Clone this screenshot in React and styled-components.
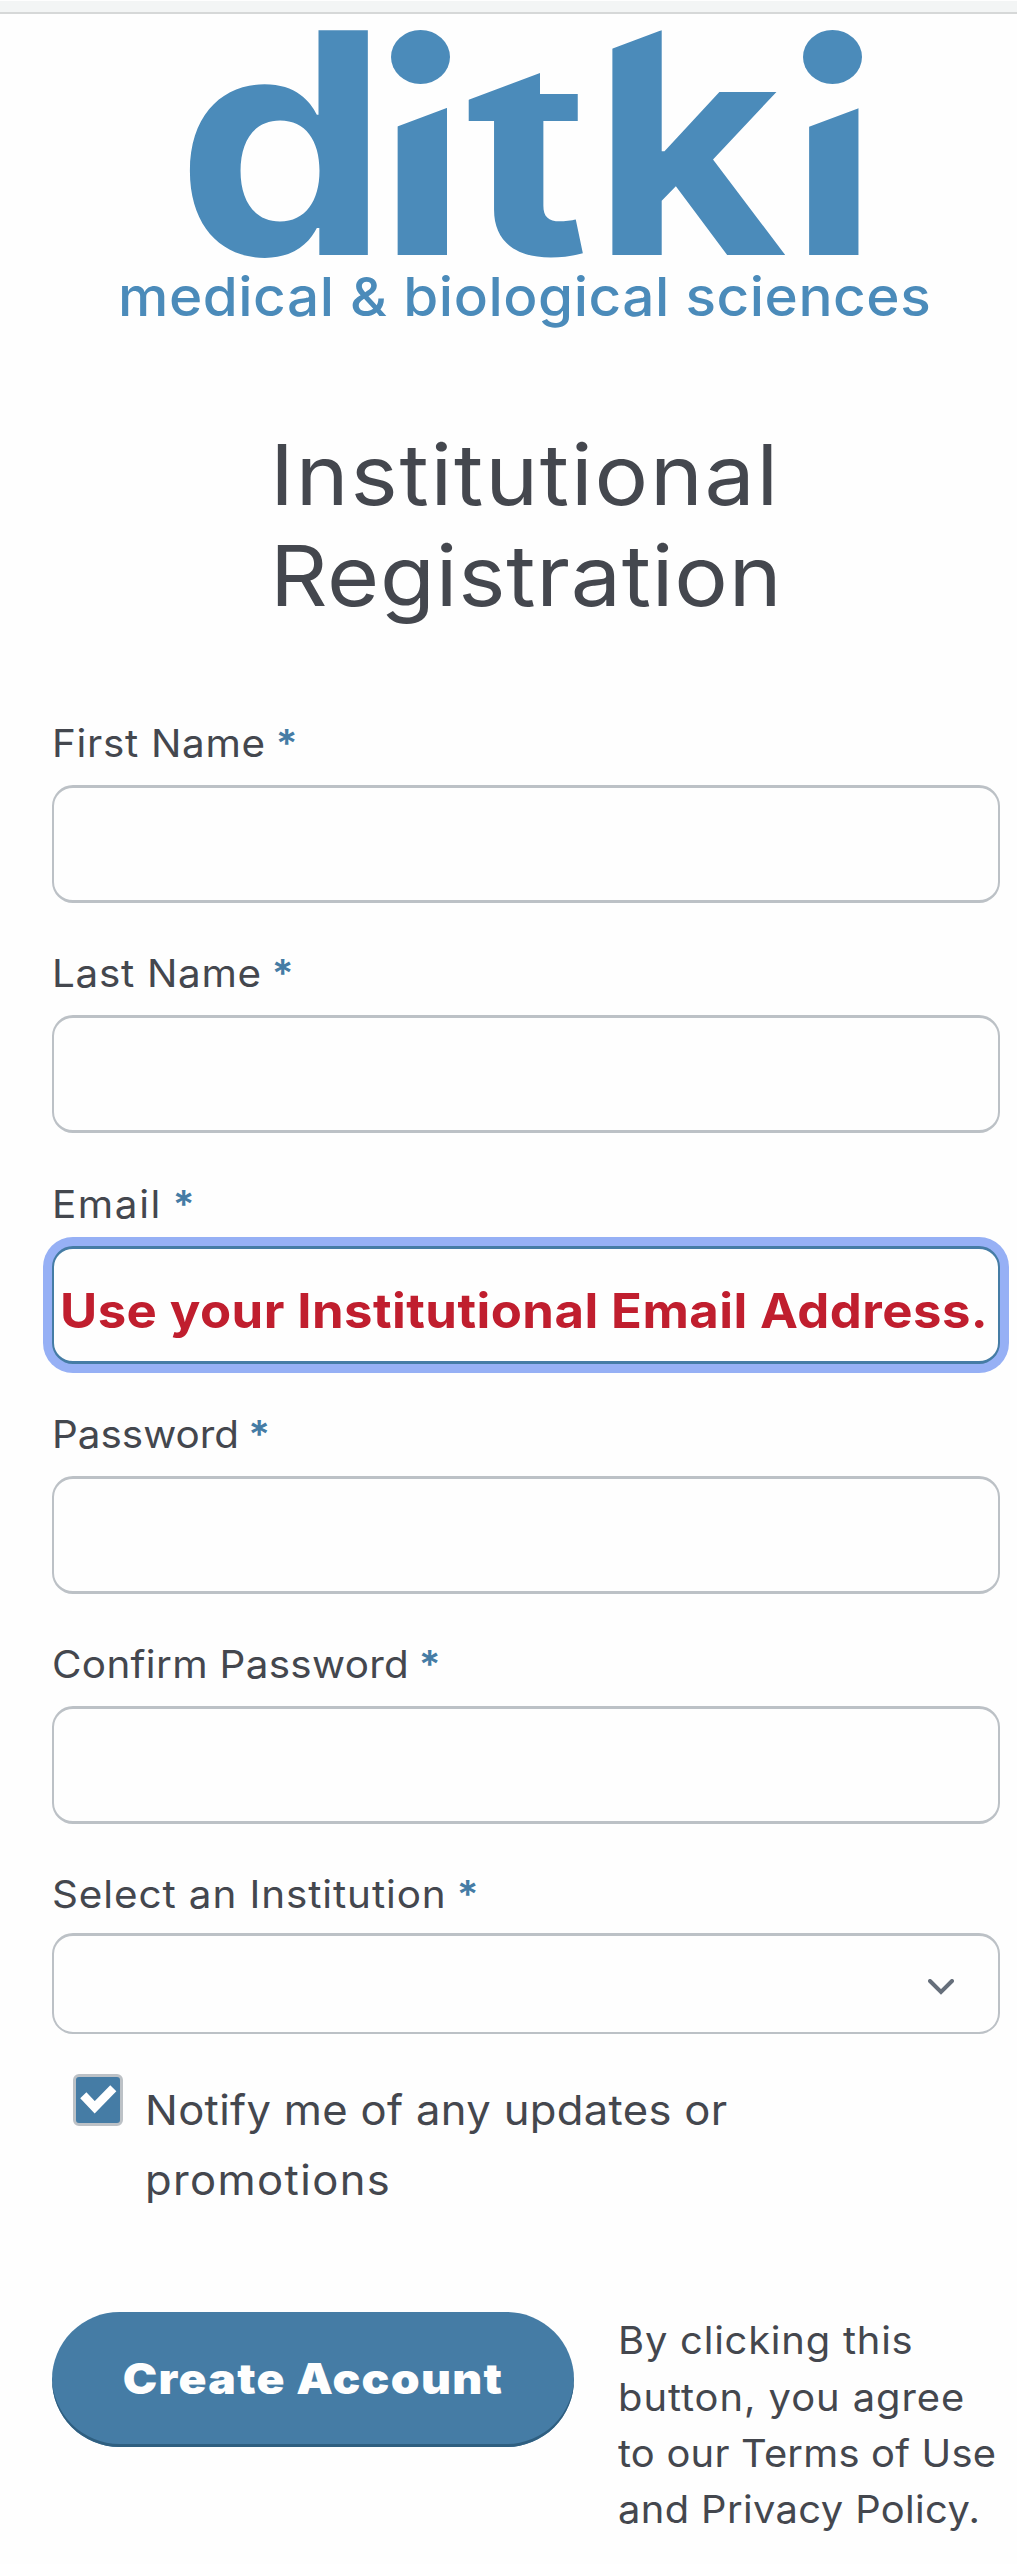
import React, { useState } from 'react'
import styled, { createGlobalStyle } from 'styled-components'

const fields=[
    {id:'firstName',label:'First Name',type:'text',spacing:0.65},
    {id:'lastName',label:'Last Name',type:'text',spacing:0.65},
    {id:'email',label:'Email',type:'email',spacing:1.5,hint:'Use your Institutional Email Address.'},
    {id:'password',label:'Password',type:'password',spacing:0},
    {id:'confirm',label:'Confirm Password',type:'password',spacing:0.3},
];

function Logo() {
    return (
    <Brand>
        <svg width="1017" height="246" viewBox="0 14 1017 246" role="img">
            <clipPath id="cuts">
                <path d="M180 14H380V260H180Z M380 133L460 103V260H380Z M464 101.5L540 73V94H600V260H464Z M602 52.4L662 30L680 23V92H795V260H602Z M795 132L870 104V260H795Z"/>
            </clipPath>
            <g fill="#4b8bba">
                <g clipPath="url(#cuts)">
                    <text
                        transform="scale(1.09 1)"
                        x="162 345.5 427 542.5 723"
                        y="255"
                        fontFamily="Inter, sans-serif"
                        fontSize="309"
                        fontWeight="700"
                    >ditki</text>
                </g>
                <ellipse cx="420.5" cy="57" rx="29.5" ry="27"/>
                <ellipse cx="832.5" cy="57" rx="29.5" ry="27"/>
            </g>
        </svg>
        <Tagline>medical &amp; biological sciences</Tagline>
    </Brand>
    )
}

function App() {
    const [notify,setNotify]=useState(true);

    return (
    <Page>
        <GlobalStyle/>
        <TopBar/>
        <Logo/>
        <Title>
            <Line $stretch={1.065} $spacing={1.7}>Institutional</Line>
            <Line $stretch={1.065} $spacing={0.75}>Registration</Line>
        </Title>
        <Form onSubmit={e=>e.preventDefault()}>
            {fields.map(f=>(
                <Field key={f.id}>
                    <Label htmlFor={f.id} $spacing={f.spacing}>{f.label} <span>*</span></Label>
                    {f.hint
                        ? <InputBox $active><Hint>{f.hint}</Hint></InputBox>
                        : <InputBox as="input" id={f.id} type={f.type}/>}
                </Field>
            ))}
            <SelectField>
                <Label $spacing={0.85}>Select an Institution <span>*</span></Label>
                <SelectBox type="button">
                    <svg width="26" height="16" viewBox="0 0 26 16" fill="none" stroke="#666f7b" strokeWidth="4">
                        <path d="M2 2L13 13L24 2" strokeLinecap="round"/>
                    </svg>
                </SelectBox>
            </SelectField>
            <Notify>
                <Checkbox type="button" onClick={()=>setNotify(!notify)}>
                    {notify && (
                        <svg width="44" height="46" viewBox="3 3 44 46" fill="none" stroke="#fff" strokeWidth="8.5">
                            <path d="M10.3 21.3L21.7 33.3L40.3 14.3"/>
                        </svg>
                    )}
                </Checkbox>
                <NotifyText>
                    <Line $spacing={0.3}>Notify me of any updates or</Line>
                    <Line $spacing={1.3}>promotions</Line>
                </NotifyText>
            </Notify>
            <Submit>
                <Button type="submit"><span>Create Account</span></Button>
                <Terms>
                    <Line $spacing={0.75}>By clicking this</Line>
                    <Line $spacing={0.9}>button, you agree</Line>
                    <Line $spacing={0.2}>to our Terms of Use</Line>
                    <Line $spacing={0.35}>and Privacy Policy.</Line>
                </Terms>
            </Submit>
        </Form>
    </Page>
    )
}

const GlobalStyle=createGlobalStyle`
*{
    box-sizing: border-box;
}

body{
    margin: 0;
    background: #fefefe;
    color: #44474e;
    font-family: Inter, "Open Sans", sans-serif;
}
`;

const Page=styled.div`
width: 1017px;
height: 2564px;
overflow: hidden;
`;

const TopBar=styled.div`
height: 14px;
background: #f3f5f5;
border-top: 1px solid #fefefe;
border-bottom: 2px solid #d6d8d8;
`;

// Letters are set slightly wide, so each line is stretched from its left edge
const Line=styled.span`
display: block;
width: max-content;
letter-spacing: ${props=>props.$spacing}px;
transform: scaleX(${props=>props.$stretch || 1.05});
transform-origin: left;
`;

const Brand=styled.div`
display: flex;
flex-direction: column;

svg{
    display: block;
}
`;

const Tagline=styled.div`
width: max-content;
height: 80px;
margin-left: 118px;
font-size: 54px;
font-weight: 450;
line-height: 74px;
letter-spacing: 0.5px;
white-space: nowrap;
color: #4b8bba;
transform: scaleX(1.05);
transform-origin: left;
`;

const Title=styled.h1`
margin: 84px 0 0;
padding-left: 270px;
font-size: 84px;
font-weight: 400;
line-height: 101px;
white-space: nowrap;
`;

const Form=styled.form`
padding: 86px 17px 0 52px;
`;

const Field=styled.div`
height: 230.25px;
`;

const Label=styled.label`
display: block;
width: max-content;
height: 73px;
font-size: 38.5px;
line-height: 62px;
letter-spacing: ${props=>props.$spacing}px;
white-space: nowrap;
transform: scaleX(1.05);
transform-origin: left;

span{
    margin-left: -2px;
    font-weight: 600;
    color: #457ca5;
}
`;

const InputBox=styled.div`
display: flex;
align-items: center;
width: 948px;
height: 118px;
padding: 12px 6px 0;
border: solid ${props=>props.$active ? '#457ca5' : '#bcc1c6'};
border-width: 3px 2px;
border-radius: 21px;
background: #fefefe;
box-shadow: ${props=>props.$active ? '0 0 0 9px #96b0f5' : 'none'};
outline: none;
`;

const Hint=styled.span`
font-size: 48px;
font-weight: 700;
letter-spacing: 0.4px;
white-space: nowrap;
color: #c01e2e;
transform: scaleX(1.06);
transform-origin: left;
`;

const SelectField=styled.div`
height: 212px;
`;

const SelectBox=styled.button`
display: flex;
align-items: center;
justify-content: flex-end;
width: 948px;
height: 101px;
margin-top: -3px;
padding: 6px 44px 0 0;
border: solid #bcc1c6;
border-width: 3px 2px 2px;
border-radius: 21px;
background: #fefefe;
`;

const Notify=styled.div`
display: flex;
gap: 22px;
height: 145px;
padding-left: 21px;
`;

const Checkbox=styled.button`
flex: none;
width: 50px;
height: 52px;
margin-top: -1px;
padding: 0;
border: 3px solid #bcc1c6;
border-radius: 6px;
background: #457ca5;

svg{
    display: block;
}
`;

const NotifyText=styled.div`
font-size: 41.5px;
line-height: 70px;
white-space: nowrap;
`;

const Submit=styled.div`
display: flex;
gap: 44px;
margin-top: 92px;
`;

const Button=styled.button`
flex: none;
width: 522px;
height: 135px;
padding: 0 0 3px;
border: none;
border-radius: 68px;
background: #457ca5;
box-shadow: inset 0 -3px 0 #2f5f80;
color: #fefefe;
font-family: inherit;
font-size: 42px;
font-weight: 900;
letter-spacing: 1.2px;
white-space: nowrap;

span{
    display: inline-block;
    transform: scaleX(1.1);
}
`;

const Terms=styled.div`
font-size: 38px;
line-height: 56.3px;
white-space: nowrap;
`;

export default App
